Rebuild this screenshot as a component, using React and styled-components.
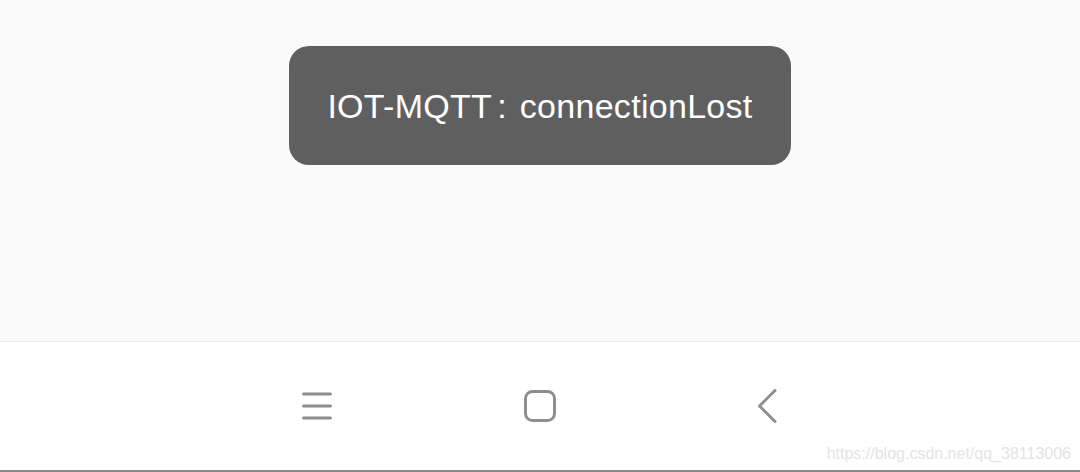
import React from 'react'
import styled, { createGlobalStyle } from 'styled-components'

const GlobalStyle = createGlobalStyle`
    html, body {
        margin: 0;
        padding: 0;
        background: #fafafa;
    }
    body {
        font-family: "Liberation Sans", "Noto Sans CJK SC", sans-serif;
    }
`;

const Screen = styled.div`
    width: 1080px;
    height: 472px;
    display: flex;
    flex-direction: column;
    overflow: hidden;
`;

const Content = styled.div`
    height: 341px;
    background: #fafafa;
    border-bottom: 1px solid #ebebeb;
    display: flex;
    justify-content: center;
    align-items: flex-start;
`;

const Toast = styled.div`
    margin-top: 46px;
    width: 502px;
    height: 119px;
    box-sizing: border-box;
    padding-top: 2px;
    border-radius: 20px;
    background: #5f5f5f;
    color: #ffffff;
    display: flex;
    align-items: center;
    justify-content: center;
    white-space: pre;
    font-family: "Liberation Sans", Arial, "Noto Sans CJK SC", sans-serif;
    font-size: 34px;
    letter-spacing: 0.3px;
`;

const Colon = styled.span`
    margin: 0 3px 0 5px;
`;

const NavBar = styled.div`
    position: relative;
    height: 128px;
    background: #ffffff;
    border-bottom: 2px solid #8a8a8a;
    display: flex;
    align-items: center;
    justify-content: center;
`;

const NavButton = styled.div`
    display: flex;
    align-items: center;
    margin-left: ${p => p.$gap || 0}px;
    color: #8e8e8e;
`;

const Watermark = styled.span`
    position: absolute;
    right: 9px;
    bottom: 7px;
    font-family: "Liberation Sans", Arial, sans-serif;
    font-size: 16px;
    color: #e4e4e4;
`;

export default function App() {
    return (
        <Screen>
            <GlobalStyle />
            <Content>
                <Toast>IOT-MQTT<Colon>:</Colon> connectionLost</Toast>
            </Content>
            <NavBar>
                <NavButton>
                    <svg width="30" height="28" viewBox="0 0 30 28">
                        <g stroke="currentColor" strokeWidth="3" strokeLinecap="round">
                            <line x1="1.5" y1="2" x2="28.5" y2="2" />
                            <line x1="1.5" y1="14" x2="28.5" y2="14" />
                            <line x1="1.5" y1="26" x2="28.5" y2="26" />
                        </g>
                    </svg>
                </NavButton>
                <NavButton $gap={191}>
                    <svg width="34" height="34" viewBox="0 0 34 34">
                        <rect x="2.5" y="2.5" width="29" height="29" rx="7" fill="none" stroke="currentColor" strokeWidth="3" />
                    </svg>
                </NavButton>
                <NavButton $gap={199}>
                    <svg width="22" height="34" viewBox="0 0 22 34">
                        <polyline points="19,1.5 3.5,17 19,32.5" fill="none" stroke="currentColor" strokeWidth="3" strokeLinecap="round" strokeLinejoin="round" />
                    </svg>
                </NavButton>
                <Watermark>https://blog.csdn.net/qq_38113006</Watermark>
            </NavBar>
        </Screen>
    )
}
